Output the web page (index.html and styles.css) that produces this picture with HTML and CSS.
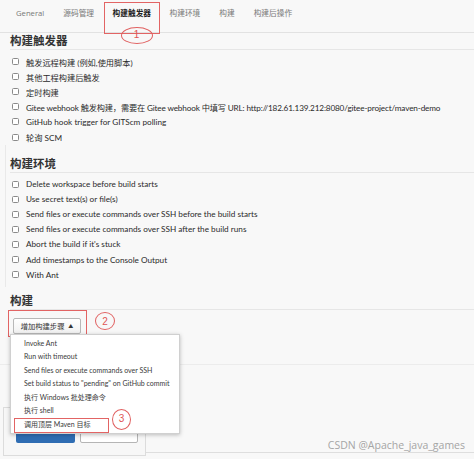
FILE: index.html
```html
<!DOCTYPE html>
<html lang="zh">
<head>
<meta charset="utf-8">
<title>Jenkins 配置</title>
<link rel="stylesheet" href="styles.css">
</head>
<body>
<div class="page">
  <nav class="tabs">
    <span class="tab">General</span>
    <span class="tab">源码管理</span>
    <span class="tab active">构建触发器<span class="mark oval-1">1</span></span>
    <span class="tab">构建环境</span>
    <span class="tab">构建</span>
    <span class="tab">构建后操作</span>
  </nav>

  <section class="sec sec-trigger">
    <h2 class="sec-title">构建触发器</h2>
    <ul class="checks">
      <li><span class="box"></span>触发远程构建 (例如,使用脚本)</li>
      <li><span class="box"></span>其他工程构建后触发</li>
      <li><span class="box"></span>定时构建</li>
      <li class="tight"><span class="box"></span>Gitee webhook 触发构建，需要在 Gitee webhook 中填写 URL: http://182.61.139.212:8080/gitee-project/maven-demo</li>
      <li><span class="box"></span>GitHub hook trigger for GITScm polling</li>
      <li><span class="box"></span>轮询 SCM</li>
    </ul>
  </section>

  <section class="sec sec-env">
    <h2 class="sec-title">构建环境</h2>
    <ul class="checks">
      <li><span class="box"></span>Delete workspace before build starts</li>
      <li><span class="box"></span>Use secret text(s) or file(s)</li>
      <li><span class="box"></span>Send files or execute commands over SSH before the build starts</li>
      <li><span class="box"></span>Send files or execute commands over SSH after the build runs</li>
      <li><span class="box"></span>Abort the build if it's stuck</li>
      <li><span class="box"></span>Add timestamps to the Console Output</li>
      <li><span class="box"></span>With Ant</li>
    </ul>
  </section>

  <section class="sec sec-build">
    <h2 class="sec-title">构建</h2>
    <div class="build-body">
      <div class="add-wrap">
        <button class="add-btn">增加构建步骤 <span class="caret">▲</span></button>
        <span class="mark box-2"></span>
        <span class="mark circle-2">2</span>
        <ul class="menu">
          <li>Invoke Ant</li>
          <li>Run with timeout</li>
          <li>Send files or execute commands over SSH</li>
          <li>Set build status to "pending" on GitHub commit</li>
          <li>执行 Windows 批处理命令</li>
          <li>执行 shell</li>
          <li class="picked">调用顶层 Maven 目标<span class="mark box-3"></span><span class="mark circle-3">3</span></li>
        </ul>
      </div>
    </div>
  </section>

  <footer class="foot">
    <div class="panel">
      <span class="btn btn-save"></span>
      <span class="btn btn-apply"></span>
    </div>
    <div class="rule"></div>
    <span class="watermark">CSDN @Apache_java_games</span>
  </footer>
</div>
</body>
</html>
```

FILE: styles.css
```css
* { box-sizing: border-box; }

html, body {
  margin: 0;
  padding: 0;
  background: #f8f8f8;
}

body {
  font-family: "Lato", "Noto Sans CJK SC", sans-serif;
  color: #333;
  width: 474px;
  height: 459px;
  overflow: hidden;
}

.page {
  position: relative;
  height: 459px;
}

/* tabs */
.tabs {
  display: flex;
  align-items: flex-start;
  height: 33px;
  padding-left: 6.5px;
  border-bottom: 1px solid #e2e2e2;
}

.tab {
  position: relative;
  height: 32px;
  padding: 7px 9.5px 0;
  font-family: "Open Sans", "Noto Sans CJK SC", sans-serif;
  font-size: 7.7px;
  line-height: 12px;
  color: #777;
  white-space: nowrap;
}

.tab.active {
  margin-top: 2px;
  height: 31.5px;
  padding: 3.5px 8px 0;
  border: 1.5px solid #e26464;
  color: #222;
  font-weight: 700;
}

.mark {
  position: absolute;
  color: #e05555;
  font-family: "Liberation Sans", sans-serif;
  font-weight: 400;
  display: flex;
  align-items: center;
  justify-content: center;
}

.oval-1 {
  left: 16px;
  top: 23.5px;
  width: 32px;
  height: 17px;
  border: 1px solid #e06060;
  border-radius: 50%;
  font-size: 10px;
}

/* sections */
.sec-title {
  margin: 0 0 0 10px;
  padding: 1px 0 2px;
  font-size: 11.5px;
  line-height: 13px;
  font-weight: 700;
  color: #333;
  border-bottom: 1px solid #e6e6e6;
}

.checks {
  list-style: none;
  margin: 0;
  padding: 4px 0 0 12px;
}

.checks li {
  display: flex;
  align-items: center;
  gap: 7px;
  height: 15.1px;
  font-size: 8.2px;
  color: #2a2a2a;
  white-space: nowrap;
}

.checks li.tight {
  letter-spacing: -0.15px;
}

.box {
  flex: none;
  width: 7px;
  height: 7px;
  background: #fff;
  border: 1px solid #8a8a8a;
  border-radius: 1.5px;
}

.sec-env {
  margin-left: 5px;
  padding: 11px 0 5px;
  border-left: 1px solid #e9e9e9;
}

.sec-env .sec-title {
  margin-left: 4px;
}

.sec-env .checks {
  padding-left: 6px;
}

.sec-build .sec-title {
  margin-top: 6px;
}

/* build */
.build-body {
  height: 55px;
  padding: 8px 0 0 13px;
  border-bottom: 1px solid #ececec;
}

.add-wrap {
  position: relative;
  width: 68px;
}

.add-btn {
  display: block;
  width: 68px;
  height: 16px;
  padding: 0;
  font-family: inherit;
  font-size: 7.3px;
  color: #333;
  background: linear-gradient(#ffffff, #f1f1f1);
  border: 1px solid #b8b8b8;
  border-radius: 2px;
}

.caret {
  font-size: 5px;
  vertical-align: 1px;
  margin-left: 2px;
}

.box-2 {
  left: -5px;
  top: -8px;
  width: 79px;
  height: 27px;
  border: 1.5px solid #e26464;
}

.circle-2 {
  left: 82px;
  top: -6px;
  width: 20px;
  height: 18px;
  border: 1px solid #e06060;
  border-radius: 50%;
  font-size: 10px;
}

.menu {
  position: absolute;
  z-index: 5;
  left: -3px;
  top: 16px;
  width: 170px;
  margin: 0;
  padding: 1.5px 0 2px;
  list-style: none;
  background: #fff;
  border: 1px solid #d0d0d0;
  box-shadow: 0 1px 4px rgba(0, 0, 0, 0.25);
}

.menu li {
  position: relative;
  height: 13.5px;
  line-height: 13.5px;
  padding-left: 13px;
  font-size: 7px;
  color: #3a3a3a;
  white-space: nowrap;
}

.box-3 {
  left: 3px;
  top: 0;
  width: 95px;
  height: 15px;
  border: 1.5px solid #e26464;
}

.circle-3 {
  left: 101px;
  top: -9px;
  width: 19px;
  height: 21px;
  border: 1px solid #e06060;
  border-radius: 50%;
  font-size: 10px;
}

/* footer */
.foot {
  position: relative;
  display: flex;
  align-items: flex-end;
  margin-top: 41px;
  height: 50px;
}

.panel {
  position: relative;
  margin-left: 3px;
  width: 143px;
  height: 49px;
  border: 1px solid #dcdcdc;
  background: #f7f7f7;
}

.btn {
  position: absolute;
  top: 18px;
  height: 17px;
  border-radius: 2px;
}

.btn-save {
  left: 12px;
  width: 59px;
  background: #2f6db3;
}

.btn-apply {
  left: 76px;
  width: 58px;
  background: #fff;
  border: 1px solid #b5b5b5;
}

.rule {
  flex: 1;
  margin-bottom: 3px;
  border-bottom: 1px solid #dedede;
}

.watermark {
  position: absolute;
  right: 9px;
  bottom: 4px;
  font-family: "Open Sans", sans-serif;
  font-size: 10.5px;
  color: #a5a5a5;
  white-space: nowrap;
}
```
